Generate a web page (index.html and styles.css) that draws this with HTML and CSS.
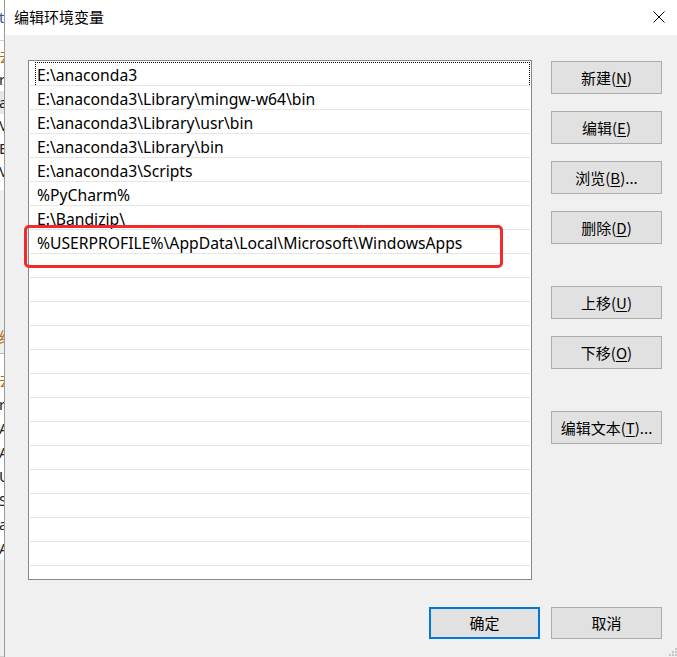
FILE: index.html
```html
<!DOCTYPE html>
<html lang="zh-CN">
<head>
<meta charset="utf-8">
<title>编辑环境变量</title>
<link rel="stylesheet" href="styles.css">
</head>
<body>
<div class="screen">
  <div class="bgwin">
    <div class="bgsec sec1"><div class="frag blue">t</div></div>
    <div class="bgsec sec2">
      <div class="frag orange">去</div>
      <div class="frag">r</div>
      <div class="frag band">a</div>
      <div class="frag">V</div>
      <div class="frag">E</div>
      <div class="frag">V</div>
    </div>
    <div class="bgsec sec3"><div class="frag orange">级</div></div>
    <div class="bgsec sec4">
      <div class="frag orange">去</div>
      <div class="frag">r</div>
      <div class="frag">A</div>
      <div class="frag">A</div>
      <div class="frag">U</div>
      <div class="frag">S</div>
      <div class="frag">a</div>
      <div class="frag">A</div>
    </div>
    <div class="bgsec sec5"></div>
  </div>

  <div class="dialog">
    <div class="titlebar">
      <span class="title">编辑环境变量</span>
      <span class="close">
        <svg width="12" height="12" viewBox="0 0 12 12"><path d="M0.5 0.5 L11.5 11.5 M11.5 0.5 L0.5 11.5" stroke="#000" stroke-width="1" fill="none"/></svg>
      </span>
    </div>
    <div class="body">
      <div class="main">
        <div class="listwrap">
          <div class="list">
            <div class="row focus">E:\anaconda3</div>
            <div class="row">E:\anaconda3\Library\mingw-w64\bin</div>
            <div class="row">E:\anaconda3\Library\usr\bin</div>
            <div class="row">E:\anaconda3\Library\bin</div>
            <div class="row">E:\anaconda3\Scripts</div>
            <div class="row">%PyCharm%</div>
            <div class="row">E:\Bandizip\</div>
            <div class="row">%USERPROFILE%\AppData\Local\Microsoft\WindowsApps</div>
            <div class="row"></div>
            <div class="row"></div>
            <div class="row"></div>
            <div class="row"></div>
            <div class="row"></div>
            <div class="row"></div>
            <div class="row"></div>
            <div class="row"></div>
            <div class="row"></div>
            <div class="row"></div>
            <div class="row"></div>
            <div class="row"></div>
            <div class="row"></div>
            <div class="row"></div>
          </div>
          <div class="mark"></div>
        </div>
        <div class="side">
          <div class="group">
            <button class="btn">新建(<u>N</u>)</button>
            <button class="btn">编辑(<u>E</u>)</button>
            <button class="btn">浏览(<u>B</u>)...</button>
            <button class="btn">删除(<u>D</u>)</button>
          </div>
          <div class="group gap-big">
            <button class="btn">上移(<u>U</u>)</button>
            <button class="btn">下移(<u>O</u>)</button>
          </div>
          <div class="group gap-big">
            <button class="btn">编辑文本(<u>T</u>)...</button>
          </div>
        </div>
      </div>
      <div class="footer">
        <button class="btn primary">确定</button>
        <button class="btn">取消</button>
      </div>
    </div>
    <span class="grip">
      <svg width="10" height="10" viewBox="0 0 10 10">
        <rect x="8" y="1" width="2" height="2" fill="#c4c4c4"/>
        <rect x="5" y="4" width="2" height="2" fill="#c4c4c4"/>
        <rect x="8" y="4" width="2" height="2" fill="#c4c4c4"/>
        <rect x="2" y="7" width="2" height="2" fill="#c4c4c4"/>
        <rect x="5" y="7" width="2" height="2" fill="#c4c4c4"/>
        <rect x="8" y="7" width="2" height="2" fill="#c4c4c4"/>
      </svg>
    </span>
  </div>
</div>
</body>
</html>
```

FILE: styles.css
```css
* { box-sizing: border-box; }
html, body { margin: 0; padding: 0; }
body {
  width: 677px;
  height: 657px;
  overflow: hidden;
  background: #f0f0f0;
  font-family: "Noto Sans", "Noto Sans CJK SC", sans-serif;
  color: #000;
}
.screen { display: flex; height: 657px; }

/* background window edge */
.bgwin {
  width: 4px;
  flex: none;
  overflow: hidden;
  display: flex;
  flex-direction: column;
  background: #fff;
  font-size: 15px;
  white-space: nowrap;
}
.bgsec { overflow: hidden; flex: none; }
.frag { height: 23px; line-height: 23px; margin-left: -1px; color: #222; }
.frag.blue { color: #2a5a9a; }
.frag.orange { color: #b56a1a; }
.frag.band { background: #e6e6e6; }
.sec1 { height: 41px; padding-top: 6px; border-bottom: 1px solid #cfcfcf; }
.sec2 { height: 149px; padding-top: 4px; }
.sec3 { height: 164px; background: #f0f0f0; padding-top: 136px; border-bottom: 1px solid #b8b8b8; }
.sec4 { height: 206px; padding-top: 14px; }
.sec4 .frag { height: 24px; line-height: 24px; }
.sec5 { flex: 1; background: #f0f0f0; border-bottom: 1px solid #cfcfcf; height: 83px; }

/* dialog */
.dialog {
  flex: 1;
  display: flex;
  flex-direction: column;
  border-left: 1px solid #9a9a9a;
  position: relative;
}
.titlebar {
  height: 35px;
  flex: none;
  background: #fff;
  display: flex;
  align-items: center;
  justify-content: space-between;
  padding: 0 12px 2px 9px;
}
.title {
  font-family: "Noto Sans CJK SC", sans-serif;
  font-size: 15px;
  line-height: 20px;
}
.close { display: flex; width: 12px; height: 12px; }

.body {
  flex: 1;
  background: #f0f0f0;
  padding: 25px 15px 0 23px;
}
.main { display: flex; gap: 19px; }

.listwrap {
  position: relative;
  width: 504px;
  height: 520px;
  flex: none;
}
.list {
  width: 504px;
  height: 520px;
  border: 1px solid #828790;
  background: #fff;
  padding: 1px 1px 0 1px;
  overflow: hidden;
}
.row {
  position: relative;
  height: 24px;
  border-bottom: 1px solid #e6e6e6;
  padding: 3px 0 0 7px;
  font-family: "Noto Sans", sans-serif;
  font-size: 15.7px;
  line-height: 20px;
  white-space: nowrap;
}
.row.focus::after {
  content: "";
  position: absolute;
  left: 5px;
  top: 0;
  right: 0;
  height: 22px;
  border: 1px dotted #000;
  border-bottom: none;
}
.mark {
  position: absolute;
  left: -4px;
  top: 165px;
  width: 479px;
  height: 43px;
  border: 3px solid #f12b2b;
  border-radius: 5px;
  pointer-events: none;
}

.side {
  width: 111px;
  flex: none;
  padding-top: 1px;
  display: flex;
  flex-direction: column;
}
.group { display: flex; flex-direction: column; gap: 17px; }
.gap-big { margin-top: 42px; }

.btn {
  width: 111px;
  height: 33px;
  margin: 0;
  padding: 0;
  background: #e1e1e1;
  border: 1px solid #adadad;
  font-family: "Noto Sans CJK SC", sans-serif;
  font-size: 15px;
  line-height: 20px;
  color: #000;
  text-align: center;
}
.btn u { text-underline-offset: 2px; }

.footer {
  display: flex;
  justify-content: flex-end;
  gap: 11px;
  margin-top: 27px;
}
.footer .btn { height: 32px; }
.btn.primary { border: 2px solid #0078d7; }

.grip {
  position: absolute;
  right: 0;
  bottom: 0;
  width: 10px;
  height: 10px;
  display: flex;
}
```
